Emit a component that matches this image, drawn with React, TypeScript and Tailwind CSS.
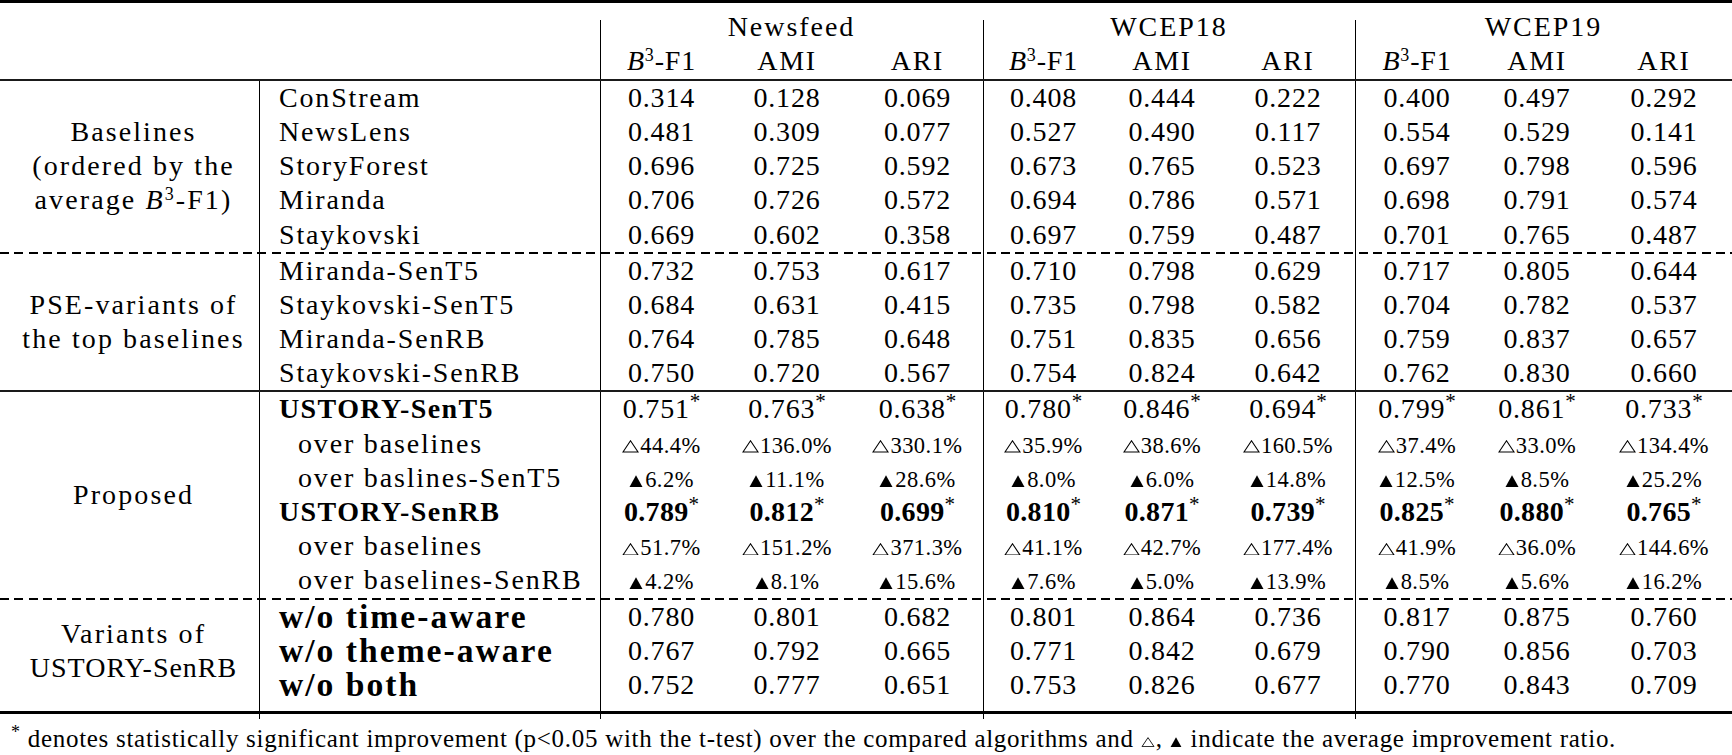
import React from "react";

const COLS =
  "grid-cols-[259px_341px_122px_130px_131px_120px_118px_134px_123px_118px_136px]";

function WhiteTri({ w = 17, h = 12.5 }: { w?: number; h?: number }) {
  return (
    <svg
      width={w}
      height={h}
      viewBox="0 0 17 12.5"
      className="inline-block align-baseline mr-[1px]"
    >
      <polygon
        points="1,12 8.5,0.8 16,12"
        fill="none"
        stroke="#000"
        strokeWidth="1.1"
        strokeLinejoin="miter"
      />
    </svg>
  );
}

function BlackTri({ w = 14, h = 12 }: { w?: number; h?: number }) {
  return (
    <svg
      width={w}
      height={h}
      viewBox="0 0 14 12"
      className="inline-block align-baseline mr-[2px]"
    >
      <polygon points="0.5,12 7,0.3 13.5,12" fill="#000" />
    </svg>
  );
}

function Val({ v }: { v: string }) {
  let s = v;
  let bold = false;
  if (s.startsWith("!")) {
    bold = true;
    s = s.slice(1);
  }
  let star = false;
  if (s.endsWith("*")) {
    star = true;
    s = s.slice(0, -1);
  }
  if (s.startsWith("△")) {
    return (
      <span className="text-[22.5px] tracking-[0.02em]">
        <WhiteTri />
        {s.slice(1)}
      </span>
    );
  }
  if (s.startsWith("▲")) {
    return (
      <span className="text-[22.5px] tracking-[0.02em]">
        <BlackTri />
        {s.slice(1)}
      </span>
    );
  }
  return (
    <span>
      <span className={bold ? "font-bold tracking-[0.01em]" : "tracking-[0.03em]"}>{s}</span>
      {star && <sup className="text-[21px] font-normal">*</sup>}
    </span>
  );
}

type Row = {
  name: string;
  bold?: boolean;
  big?: boolean;
  indent?: boolean;
  vals: string[];
};

const ROWSPAN: Record<number, string> = {
  3: "row-span-3",
  4: "row-span-4",
  5: "row-span-5",
  6: "row-span-6",
};

const groupBorder = (i: number) =>
  i === 0 || i === 3 || i === 6 ? "border-l border-black" : "";

function nameClass(r: Row) {
  if (r.big) return "pl-[19px] font-bold text-[33.6px] tracking-[0.06em]";
  if (r.bold) return "pl-[19px] font-bold tracking-[0.05em]";
  if (r.indent) return "pl-[38px] tracking-[0.065em]";
  return "pl-[19px] tracking-[0.065em]";
}

function Section({ label, rows }: { label: React.ReactNode; rows: Row[] }) {
  return (
    <div className={`grid ${COLS} auto-rows-[34.2px]`}>
      <div
        className={`${ROWSPAN[rows.length]} flex flex-col items-center justify-center text-center leading-[34.2px] pl-[8px] tracking-[0.075em]`}
      >
        {label}
      </div>
      {rows.map((r, ri) => (
        <React.Fragment key={ri}>
          <div
            className={`border-l border-black leading-[34.2px] whitespace-nowrap ${nameClass(r)}`}
          >
            {r.name}
          </div>
          {r.vals.map((v, vi) => (
            <div
              key={vi}
              className={`${groupBorder(vi)} text-center leading-[34.2px] whitespace-nowrap`}
            >
              <Val v={v} />
            </div>
          ))}
        </React.Fragment>
      ))}
    </div>
  );
}

function VLines({ h }: { h: string }) {
  return (
    <div className={`grid ${COLS} ${h}`}>
      <div />
      <div className="border-l border-black" />
      <div className="border-l border-black" />
      <div />
      <div />
      <div className="border-l border-black" />
      <div />
      <div />
      <div className="border-l border-black" />
      <div />
      <div />
    </div>
  );
}

function DashedRule() {
  return (
    <div className="h-[2px] bg-[repeating-linear-gradient(to_right,#000_0px,#000_9px,transparent_9px,transparent_14.3px)]">
      <VLines h="h-[2px]" />
    </div>
  );
}

function SolidRule() {
  return <div className="h-[2px] bg-[#1a1a1a]" />;
}

const B3 = () => (
  <span className="tracking-[0.03em]">
    <i>B</i>
    <sup className="text-[18px]">3</sup>-F1
  </span>
);

const baselines: Row[] = [
  { name: "ConStream", vals: ["0.314", "0.128", "0.069", "0.408", "0.444", "0.222", "0.400", "0.497", "0.292"] },
  { name: "NewsLens", vals: ["0.481", "0.309", "0.077", "0.527", "0.490", "0.117", "0.554", "0.529", "0.141"] },
  { name: "StoryForest", vals: ["0.696", "0.725", "0.592", "0.673", "0.765", "0.523", "0.697", "0.798", "0.596"] },
  { name: "Miranda", vals: ["0.706", "0.726", "0.572", "0.694", "0.786", "0.571", "0.698", "0.791", "0.574"] },
  { name: "Staykovski", vals: ["0.669", "0.602", "0.358", "0.697", "0.759", "0.487", "0.701", "0.765", "0.487"] },
];

const pse: Row[] = [
  { name: "Miranda-SenT5", vals: ["0.732", "0.753", "0.617", "0.710", "0.798", "0.629", "0.717", "0.805", "0.644"] },
  { name: "Staykovski-SenT5", vals: ["0.684", "0.631", "0.415", "0.735", "0.798", "0.582", "0.704", "0.782", "0.537"] },
  { name: "Miranda-SenRB", vals: ["0.764", "0.785", "0.648", "0.751", "0.835", "0.656", "0.759", "0.837", "0.657"] },
  { name: "Staykovski-SenRB", vals: ["0.750", "0.720", "0.567", "0.754", "0.824", "0.642", "0.762", "0.830", "0.660"] },
];

const proposed: Row[] = [
  { name: "USTORY-SenT5", bold: true, vals: ["0.751*", "0.763*", "0.638*", "0.780*", "0.846*", "0.694*", "0.799*", "0.861*", "0.733*"] },
  { name: "over baselines", indent: true, vals: ["△44.4%", "△136.0%", "△330.1%", "△35.9%", "△38.6%", "△160.5%", "△37.4%", "△33.0%", "△134.4%"] },
  { name: "over baslines-SenT5", indent: true, vals: ["▲6.2%", "▲11.1%", "▲28.6%", "▲8.0%", "▲6.0%", "▲14.8%", "▲12.5%", "▲8.5%", "▲25.2%"] },
  { name: "USTORY-SenRB", bold: true, vals: ["!0.789*", "!0.812*", "!0.699*", "!0.810*", "!0.871*", "!0.739*", "!0.825*", "!0.880*", "!0.765*"] },
  { name: "over baselines", indent: true, vals: ["△51.7%", "△151.2%", "△371.3%", "△41.1%", "△42.7%", "△177.4%", "△41.9%", "△36.0%", "△144.6%"] },
  { name: "over baselines-SenRB", indent: true, vals: ["▲4.2%", "▲8.1%", "▲15.6%", "▲7.6%", "▲5.0%", "▲13.9%", "▲8.5%", "▲5.6%", "▲16.2%"] },
];

const variants: Row[] = [
  { name: "w/o time-aware", big: true, vals: ["0.780", "0.801", "0.682", "0.801", "0.864", "0.736", "0.817", "0.875", "0.760"] },
  { name: "w/o theme-aware", big: true, vals: ["0.767", "0.792", "0.665", "0.771", "0.842", "0.679", "0.790", "0.856", "0.703"] },
  { name: "w/o both", big: true, vals: ["0.752", "0.777", "0.651", "0.753", "0.826", "0.677", "0.770", "0.843", "0.709"] },
];

const headLine =
  "bg-[linear-gradient(#000,#000)] bg-no-repeat bg-[length:1px_100%] bg-[position:0_10px]";

export default function App() {
  return (
    <div className="w-[1732px] h-[755px] bg-white text-black [font-family:'Liberation_Serif','Times_New_Roman',serif] text-[28px] overflow-hidden">
      {/* top rule */}
      <div className="h-[3px] bg-black" />
      <div className="h-[7px]" />
      {/* header */}
      <div className={`grid ${COLS} auto-rows-[34.4px]`}>
        <div className="col-span-2" />
        <div className={`col-span-3 text-center leading-[34.4px] tracking-[0.07em] ${headLine}`}>
          Newsfeed
        </div>
        <div className={`col-span-3 text-center leading-[34.4px] tracking-[0.07em] ${headLine}`}>
          WCEP18
        </div>
        <div className={`col-span-3 text-center leading-[34.4px] tracking-[0.07em] ${headLine}`}>
          WCEP19
        </div>
        <div className="col-span-2" />
        {[0, 1, 2].map((g) => (
          <React.Fragment key={g}>
            <div className="border-l border-black text-center leading-[34.4px]">
              <B3 />
            </div>
            <div className="text-center leading-[34.4px] tracking-[0.06em]">AMI</div>
            <div className="text-center leading-[34.4px] tracking-[0.06em]">ARI</div>
          </React.Fragment>
        ))}
      </div>
      <SolidRule />
      <Section
        label={
          <>
            <span>Baselines</span>
            <span>(ordered by the</span>
            <span>
              average <i>B</i>
              <sup className="text-[18px]">3</sup>-F1)
            </span>
          </>
        }
        rows={baselines}
      />
      <DashedRule />
      <Section
        label={
          <>
            <span>PSE-variants of</span>
            <span>the top baselines</span>
          </>
        }
        rows={pse}
      />
      <SolidRule />
      <Section label={<span>Proposed</span>} rows={proposed} />
      <DashedRule />
      <Section
        label={
          <>
            <span>Variants of</span>
            <span className="tracking-[0.035em]">USTORY-SenRB</span>
          </>
        }
        rows={variants}
      />
      <VLines h="h-[9px]" />
      <div className="h-[3px] bg-black" />
      <VLines h="h-[5px]" />
      <div className="pl-[11px] mt-[5px] text-[25px] leading-[30px] tracking-[0.0285em] whitespace-nowrap">
        <sup className="text-[18px]">*</sup> denotes statistically significant
        improvement (p&lt;0.05 with the t-test) over the compared algorithms and{" "}
        <WhiteTri w={14} h={10} />, <BlackTri w={12} h={10} /> indicate the
        average improvement ratio.
      </div>
    </div>
  );
}
